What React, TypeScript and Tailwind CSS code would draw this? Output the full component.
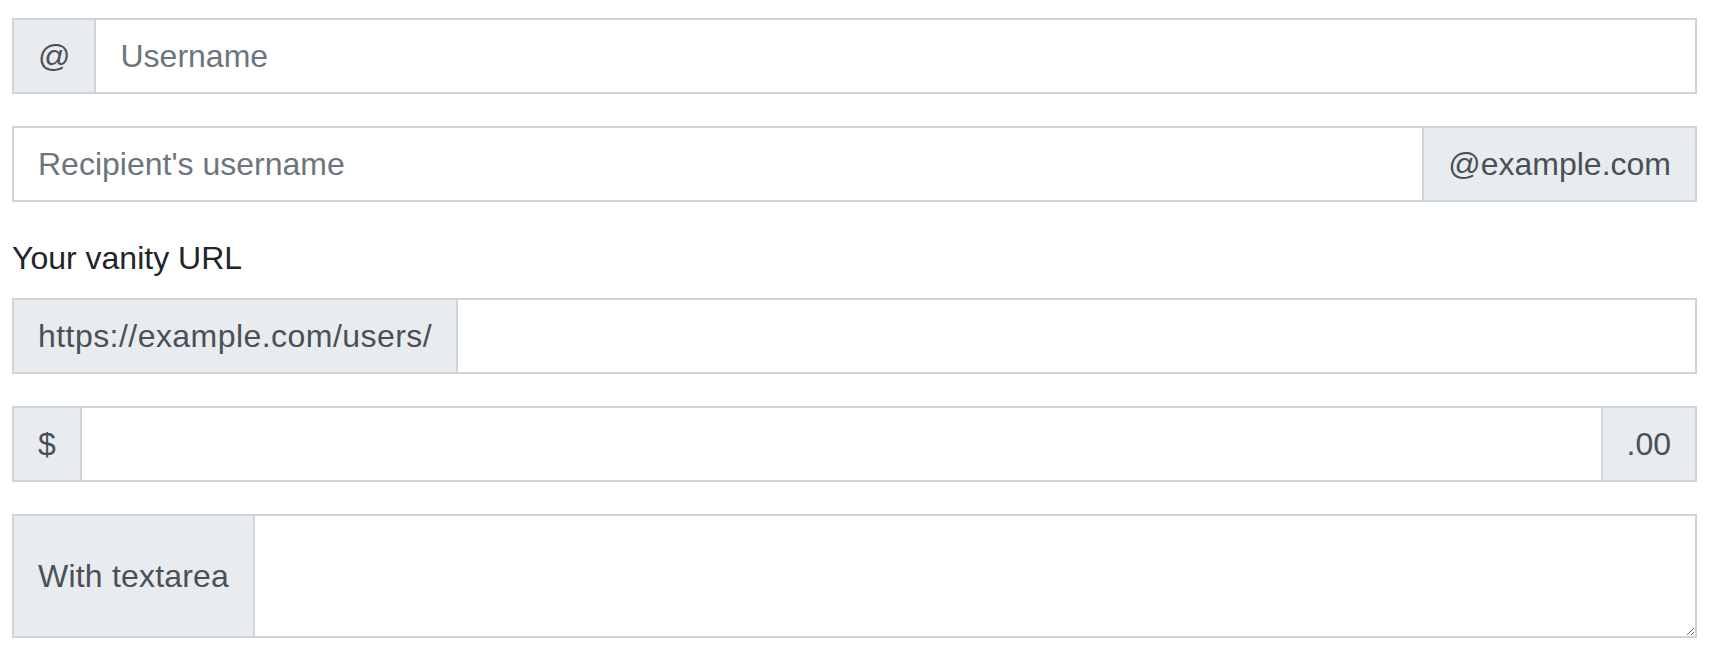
const font = { fontFamily: '"Liberation Sans", Arial, sans-serif' }

function Addon({ children, side = "left", extra = "" }: { children: React.ReactNode; side?: "left" | "right"; extra?: string }) {
  return (
    <span
      className={
        "flex items-center bg-[#e9ecef] px-[24px] text-[32px] leading-[48px] text-[#495057] whitespace-nowrap border-[#ced4da] " +
        (side === "left" ? "border-r-2 " : "border-l-2 ") +
        extra
      }
    >
      {children}
    </span>
  )
}

function Field({ placeholder }: { placeholder?: string }) {
  return (
    <input
      type="text"
      placeholder={placeholder}
      className="flex-1 min-w-0 bg-white px-[24px] text-[32px] leading-[48px] text-[#495057] placeholder:text-[#6c757d] outline-none"
    />
  )
}

export default function App() {
  return (
    <main className="min-h-screen bg-white pt-[18px] pl-[12px] pr-[25px]" style={font}>
      <div className="flex h-[76px] border-2 border-[#ced4da] mb-[32px]">
        <Addon>@</Addon>
        <Field placeholder="Username" />
      </div>

      <div className="flex h-[76px] border-2 border-[#ced4da] mb-[32px]">
        <Field placeholder="Recipient's username" />
        <Addon side="right">@example.com</Addon>
      </div>

      <label className="block text-[32px] leading-[48px] text-[#212529] mb-[16px]">Your vanity URL</label>
      <div className="flex h-[76px] border-2 border-[#ced4da] mb-[32px]">
        <Addon extra="tracking-[0.45px]">https://example.com/users/</Addon>
        <Field />
      </div>

      <div className="flex h-[76px] border-2 border-[#ced4da] mb-[32px]">
        <Addon>$</Addon>
        <Field />
        <Addon side="right">.00</Addon>
      </div>

      <div className="flex h-[124px] border-2 border-[#ced4da]">
        <Addon extra="tracking-[0.2px]">With textarea</Addon>
        <textarea className="flex-1 h-full bg-white px-[24px] py-[12px] text-[32px] leading-[48px] text-[#495057] outline-none resize-y" />
      </div>
    </main>
  )
}
